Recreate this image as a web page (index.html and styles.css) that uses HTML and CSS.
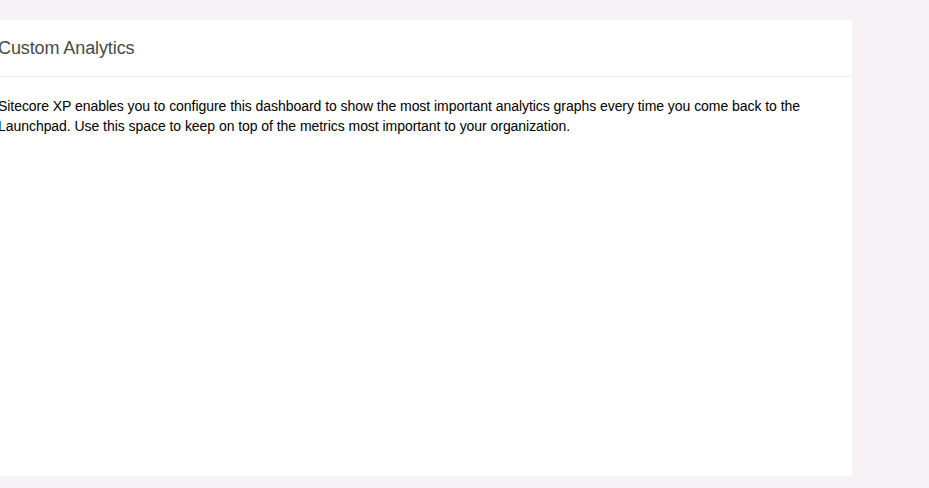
FILE: index.html
```html
<!DOCTYPE html>
<html lang="en">
<head>
  <meta charset="UTF-8">
  <title>Launchpad - Custom Analytics</title>
  <link rel="stylesheet" href="styles.css">
</head>
<body>

  <div class="dashboard">
    <div class="panel">
      <div class="panel-header">
        <h2>Custom Analytics</h2>
      </div>
      <div class="panel-body">
        <p>Sitecore XP enables you to configure this dashboard to show the most important analytics graphs every time you come back to the Launchpad. Use this space to keep on top of the metrics most important to your organization.</p>
      </div>
    </div>
  </div>

</body>
</html>
```

FILE: styles.css
```css
body {
  margin: 0;
  font-family: "Liberation Sans", Arial, sans-serif;
  background: #f7f2f6;
  color: #000;
}

.dashboard {
  padding: 20px 0 12px;
}

.panel {
  margin-left: -17px;
  width: 869px;
  height: 456px;
  background: #fff;
  display: flex;
  flex-direction: column;
}

.panel-header {
  padding: 18px 15px 18px;
  border-bottom: 1px solid #f2eef1;
}

.panel-header h2 {
  margin: 0;
  font-size: 18px;
  font-weight: normal;
  line-height: 20px;
  color: #4a4a4a;
  letter-spacing: -0.1px;
}

.panel-body {
  padding: 19px 15px;
}

.panel-body p {
  margin: 0;
  font-size: 14px;
  line-height: 20px;
  letter-spacing: -0.05px;
}
```
